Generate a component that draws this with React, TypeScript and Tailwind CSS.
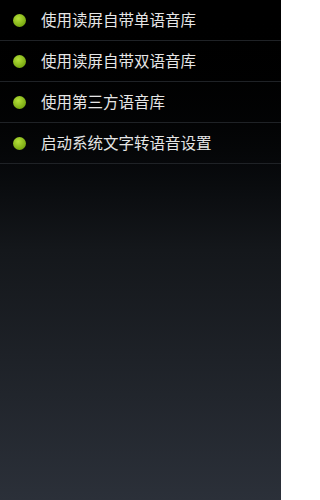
const items = [
  '使用读屏自带单语音库',
  '使用读屏自带双语音库',
  '使用第三方语音库',
  '启动系统文字转语音设置',
];

export default function App() {
  return (
    <div
      className="h-[500px] w-[281px] bg-gradient-to-b from-[#000000] via-[#14171b] to-[#2b3039]"
      style={{ fontFamily: '"Noto Sans CJK SC", "Noto Sans", sans-serif' }}
    >
      <ul>
        {items.map((label) => (
          <li
            key={label}
            className="flex h-[41px] items-center border-b border-[#1f2226] pl-[13px]"
          >
            <span className="h-[13px] w-[13px] rounded-full bg-[radial-gradient(circle_at_40%_35%,#b5e03a,#7aaa12_70%,#5c8a0a)]" />
            <span className="ml-[15px] text-[15.5px] leading-none text-[#e6e6e6]">
              {label}
            </span>
          </li>
        ))}
      </ul>
    </div>
  );
}
